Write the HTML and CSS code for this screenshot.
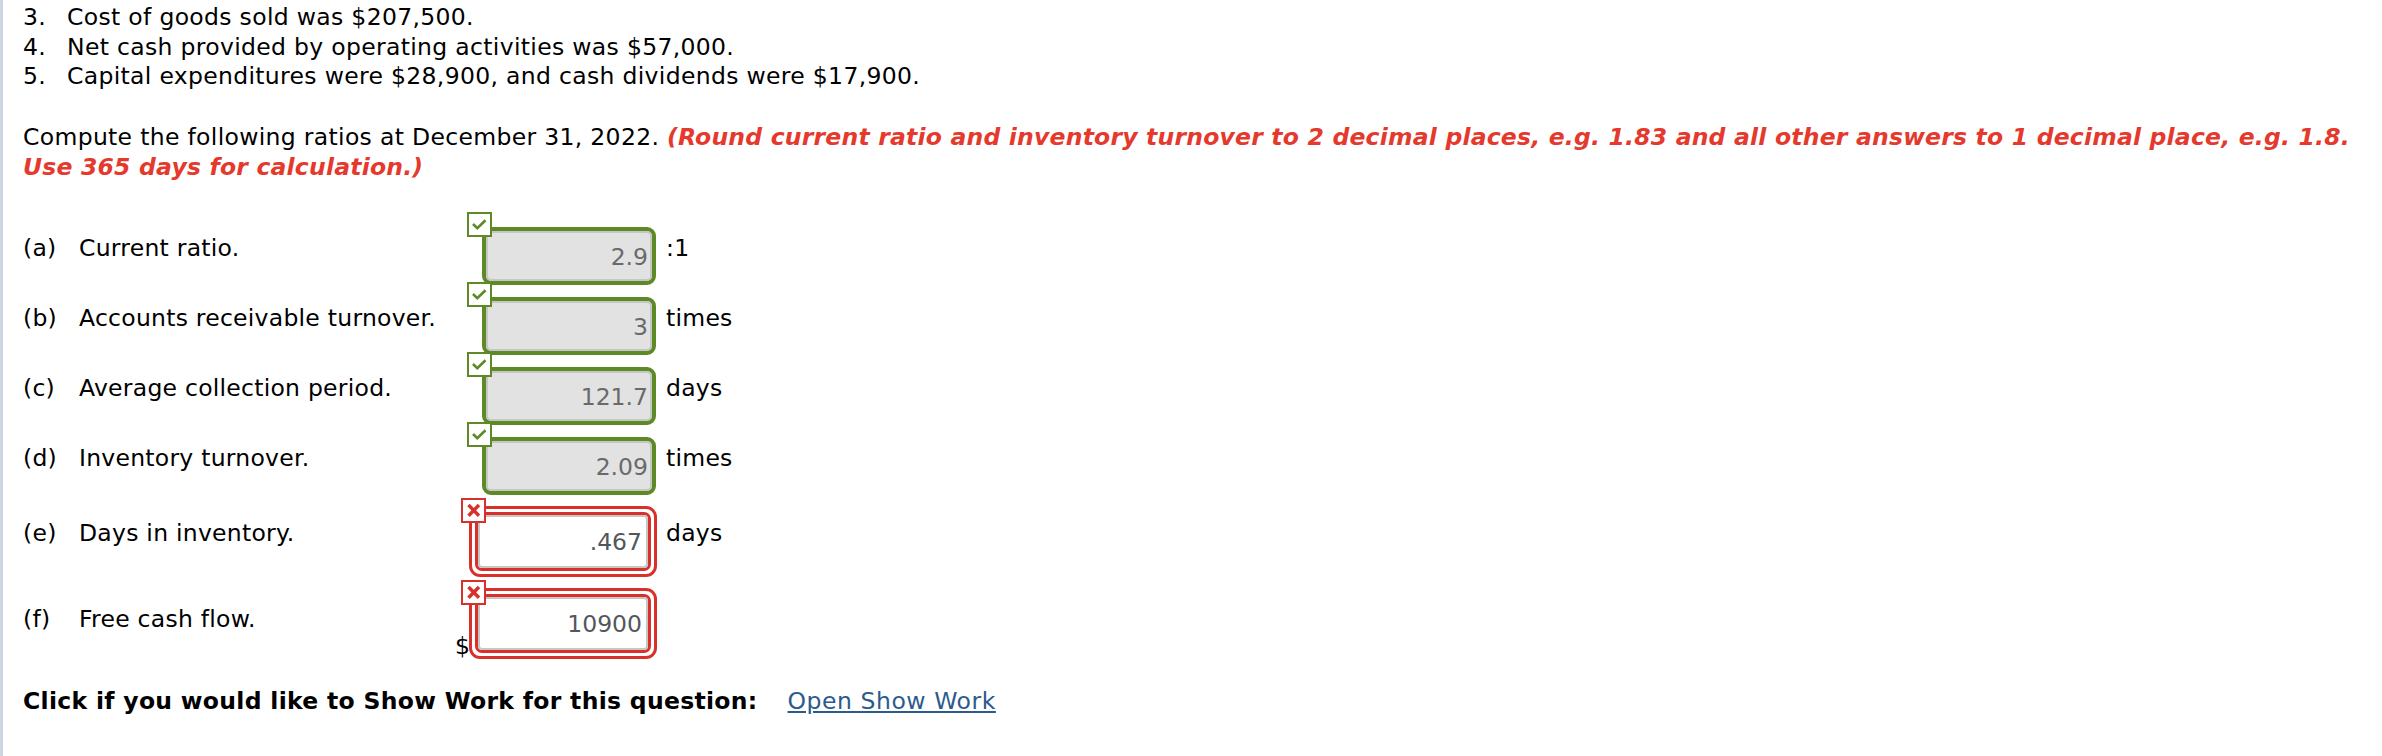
FILE: index.html
```html
<!DOCTYPE html>
<html lang="en">
<head>
<meta charset="utf-8">
<title>Ratios</title>
<link rel="stylesheet" href="styles.css">
</head>
<body>
<div class="page">
  <div class="facts">
    <div class="fact"><span class="fact-num">3.</span><span>Cost of goods sold was $207,500.</span></div>
    <div class="fact"><span class="fact-num">4.</span><span>Net cash provided by operating activities was $57,000.</span></div>
    <div class="fact"><span class="fact-num">5.</span><span>Capital expenditures were $28,900, and cash dividends were $17,900.</span></div>
  </div>

  <p class="instructions">Compute the following ratios at December 31, 2022. <strong class="note">(Round current ratio and inventory turnover to 2 decimal places, e.g. 1.83 and all other answers to 1 decimal place, e.g. 1.8.<br>Use 365 days for calculation.)</strong></p>

  <div class="answers">
    <div class="answer-row">
      <span class="ans-letter">(a)</span>
      <span class="ans-label">Current ratio.</span>
      <div class="ans-cell ans-cell--ok">
        <span class="badge badge--ok"><svg viewBox="0 0 21 21" width="21" height="21"><polyline points="4,10 8.3,14.2 16.5,6.2" fill="none" stroke="#5d8a25" stroke-width="2.6"/></svg></span>
        <div class="field-ok"><div class="field-input field-input--ok">2.9</div></div>
      </div>
      <span class="ans-unit">:1</span>
    </div>

    <div class="answer-row">
      <span class="ans-letter">(b)</span>
      <span class="ans-label">Accounts receivable turnover.</span>
      <div class="ans-cell ans-cell--ok">
        <span class="badge badge--ok"><svg viewBox="0 0 21 21" width="21" height="21"><polyline points="4,10 8.3,14.2 16.5,6.2" fill="none" stroke="#5d8a25" stroke-width="2.6"/></svg></span>
        <div class="field-ok"><div class="field-input field-input--ok">3</div></div>
      </div>
      <span class="ans-unit">times</span>
    </div>

    <div class="answer-row">
      <span class="ans-letter">(c)</span>
      <span class="ans-label">Average collection period.</span>
      <div class="ans-cell ans-cell--ok">
        <span class="badge badge--ok"><svg viewBox="0 0 21 21" width="21" height="21"><polyline points="4,10 8.3,14.2 16.5,6.2" fill="none" stroke="#5d8a25" stroke-width="2.6"/></svg></span>
        <div class="field-ok"><div class="field-input field-input--ok">121.7</div></div>
      </div>
      <span class="ans-unit">days</span>
    </div>

    <div class="answer-row answer-row--before-err">
      <span class="ans-letter">(d)</span>
      <span class="ans-label">Inventory turnover.</span>
      <div class="ans-cell ans-cell--ok">
        <span class="badge badge--ok"><svg viewBox="0 0 21 21" width="21" height="21"><polyline points="4,10 8.3,14.2 16.5,6.2" fill="none" stroke="#5d8a25" stroke-width="2.6"/></svg></span>
        <div class="field-ok"><div class="field-input field-input--ok">2.09</div></div>
      </div>
      <span class="ans-unit">times</span>
    </div>

    <div class="answer-row answer-row--err">
      <span class="ans-letter">(e)</span>
      <span class="ans-label">Days in inventory.</span>
      <div class="ans-cell ans-cell--err">
        <span class="badge badge--err"><svg viewBox="0 0 21 21" width="21" height="21"><path d="M5.5 5 L16 15.8 M16 5 L5.5 15.8" fill="none" stroke="#d8302a" stroke-width="3.4"/></svg></span>
        <div class="field-err"><div class="field-err-inner"><div class="field-input field-input--err">.467</div></div></div>
      </div>
      <span class="ans-unit">days</span>
    </div>

    <div class="answer-row answer-row--last">
      <span class="ans-letter">(f)</span>
      <span class="ans-label ans-label--last">Free cash flow.</span>
      <div class="ans-cell ans-cell--err ans-cell--money">
        <span class="currency">$</span>
        <span class="badge badge--err"><svg viewBox="0 0 21 21" width="21" height="21"><path d="M5.5 5 L16 15.8 M16 5 L5.5 15.8" fill="none" stroke="#d8302a" stroke-width="3.4"/></svg></span>
        <div class="field-err"><div class="field-err-inner"><div class="field-input field-input--err">10900</div></div></div>
      </div>
      <span class="ans-unit"></span>
    </div>
  </div>

  <p class="show-work"><strong>Click if you would like to Show Work for this question:</strong><a class="show-link" href="#">Open Show Work</a></p>
</div>
</body>
</html>
```

FILE: styles.css
```css
html, body {
  margin: 0;
  padding: 0;
  background: #ffffff;
}

body {
  font-family: "DejaVu Sans", Verdana, sans-serif;
  font-size: 23.5px;
  line-height: 29.5px;
  color: #000000;
  letter-spacing: 0.25px;
  overflow: hidden;
}

.page {
  box-sizing: border-box;
  min-height: 756px;
  border-left: 3px solid #cdd5e0;
  padding: 3px 0 0 20px;
}

.fact {
  display: flex;
}

.fact-num {
  flex: none;
  width: 44px;
}

.facts .fact span:last-child {
  letter-spacing: 0.32px;
}

.instructions {
  margin: 31.5px 0 0;
  white-space: nowrap;
  letter-spacing: 0.32px;
}

.note {
  color: #e5392d;
  font-weight: bold;
  font-style: italic;
  letter-spacing: 0.2px;
}

.answers {
  margin-top: 31px;
}

.answer-row {
  display: grid;
  grid-template-columns: 56px 376px 211px auto;
  align-items: start;
  height: 70px;
}

.answer-row--before-err {
  height: 75px;
}

.answer-row--err {
  height: 82px;
}

.answer-row--last {
  height: 80px;
}

.ans-letter,
.ans-label,
.ans-unit {
  padding-top: 21px;
}

.answer-row--last .ans-letter,
.ans-label--last {
  padding-top: 25px;
}

.ans-cell {
  position: relative;
  display: flex;
  align-items: flex-end;
  letter-spacing: 0;
}

.ans-cell--ok {
  padding: 14px 0 0 27px;
}

.ans-cell--err {
  padding: 8px 0 0 14px;
}

.ans-cell--money {
  padding-left: 0;
}

.currency {
  width: 14px;
  flex: none;
  margin-bottom: -2px;
}

.badge {
  position: absolute;
  top: 0;
  z-index: 2;
  box-sizing: border-box;
  width: 25px;
  height: 25px;
  background: #ffffff;
  display: flex;
  align-items: center;
  justify-content: center;
}

.badge svg {
  display: block;
}

.badge--ok {
  left: 12px;
  top: -1px;
  border: 2px solid #5d8a25;
}

.badge--err {
  left: 6px;
  border: 2px solid #d8302a;
}

.field-ok {
  box-sizing: border-box;
  width: 174px;
  height: 58px;
  border: 4px solid #5d8a25;
  border-radius: 9px;
  background: #e2e2e2;
}

.field-err {
  box-sizing: border-box;
  width: 188px;
  height: 71px;
  border: 3px solid #d8302a;
  border-radius: 11px;
  padding: 3px;
  background: #ffffff;
}

.field-err-inner {
  box-sizing: border-box;
  height: 100%;
  border: 3px solid #d8302a;
  border-radius: 7px;
}

.field-input {
  box-sizing: border-box;
  height: 100%;
  border: 2px solid #c6c6c6;
  text-align: right;
}

.field-input--ok {
  border-radius: 5px;
  background: #e2e2e2;
  color: #6a6a6a;
  padding: 10px 2px 0 0;
}

.field-input--err {
  border-radius: 4px;
  background: #ffffff;
  color: #53575b;
  padding: 11px 4px 0 0;
}

.show-work {
  margin: 27px 0 0;
}

.show-work strong {
  font-weight: bold;
  letter-spacing: 0.3px;
}

.show-link {
  margin-left: 30px;
  color: #2b5b8c;
  text-decoration: underline;
  letter-spacing: 0.55px;
}
```
